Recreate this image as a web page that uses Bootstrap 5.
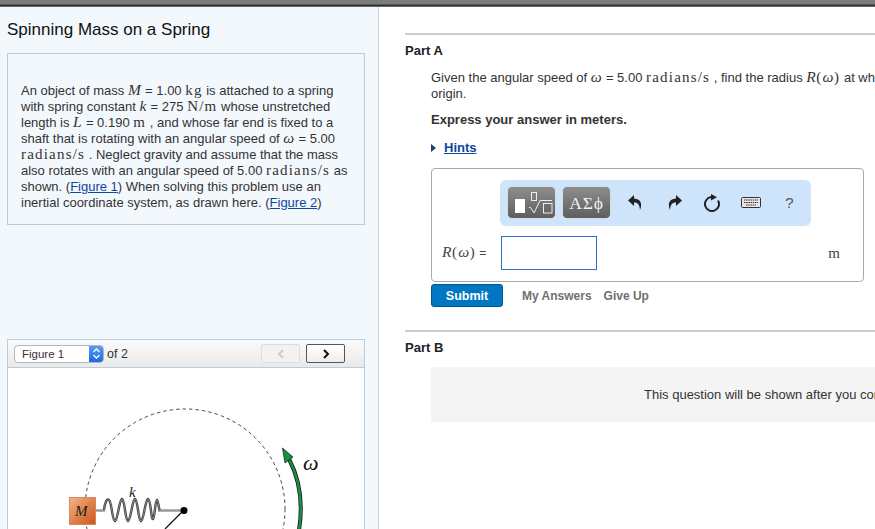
<!DOCTYPE html>
<html lang="en">
<head>
<meta charset="utf-8">
<title>Spinning Mass on a Spring</title>
<link href="https://cdn.jsdelivr.net/npm/bootstrap@5.3.0/dist/css/bootstrap.min.css" rel="stylesheet">
<style>
html,body{height:529px;overflow:hidden;background:#fff}
body{font-family:"Liberation Sans",Arial,sans-serif;font-size:13px;line-height:16px;color:#333}
.topstrip{height:7px;background:linear-gradient(#7b7b7b 0,#7b7b7b 4px,#333 5px,#333 6px,#999 7px)}
.shell{height:522px}
.leftpane{width:379px;flex:none;background:#f3f8fd;border-right:1px solid #c6d6e6;padding:0 13px 0 7px}
.rightpane{flex:1 1 auto;min-width:0;overflow:hidden;padding:26px 0 0 26px}
.ptitle{font-size:17px;line-height:22px;font-weight:400;color:#111;margin:12px 0 12px}
.probbox{height:172px;border:1px solid #b7cde0;padding:29px 13px 0;white-space:nowrap}
.probbox a,.hintlink{color:#0f46a0;text-decoration:underline}
.mth{font-family:"Liberation Serif",serif;font-size:15px;line-height:0;letter-spacing:1.2px}
.mi{font-family:"Liberation Serif",serif;font-size:15.5px;font-style:italic;line-height:0;letter-spacing:.6px}
.figpanel{margin-top:114px;border:1px solid #b7cde0;background:#fff;height:200px}
.figbar{height:28px;background:linear-gradient(#fbfbfb,#e9e9e9);border-bottom:1px solid #b7cde0;padding:0 19px 0 6px}
.figselect{width:90px;height:18px;background:#fff;border:1px solid #b5b5b5;border-radius:4px;padding-left:7px;font-size:11.5px;line-height:16px;overflow:hidden;position:relative}
.figarrows{position:absolute;right:-1px;top:-1px;width:15px;height:18px;background:linear-gradient(#5b9ff5,#1668e0);border-radius:0 4px 4px 0;display:flex;align-items:center;justify-content:center}
.ofword{margin-left:3px;font-size:12.5px}
.navgroup{gap:6px}
.navbtn{width:39px;height:19px;border:1px solid #555;border-radius:2px;background:linear-gradient(#fff,#eee);padding:0;display:flex;align-items:center;justify-content:center}
.navbtn.dimmed{border-color:#ddd;background:#f2f2f2}
.figcanvas{display:block}
.partrule{height:2px;background:#ccc;border:0;margin:0;opacity:1}
.parthead{font-size:13px;font-weight:700;line-height:16px;color:#222;margin:8px 0 0}
.partbody{padding-left:26px}
.qtext{margin:11px 0 0;white-space:nowrap;line-height:16px}
.express{font-weight:700;margin:10px 0 0;color:#333}
.hintrow{margin-top:12px;font-weight:700}
.answerbox{width:433px;height:114px;margin-top:12px;border:1px solid #aaa;border-radius:4px;padding:11px 0 0 10px}
.mathbar{width:311px;height:46px;margin-left:58px;background:#cde4fb;border-radius:6px;padding:6px 0 0 7px}
.toolbtn{flex:none;width:49px;height:33px;border-radius:5px;border:1px solid #d5dde5;background:linear-gradient(#8e8e8e,#5e5e5e);color:#f1f1f1;padding:0;display:flex;align-items:center;justify-content:center;font-family:"Liberation Serif",serif;font-size:17.5px;letter-spacing:.8px}
.toolbtn+.toolbtn{margin-left:6px}
.mathtools{height:33px}
.undoico{margin-left:17px}
.redoico{margin-left:26px}
.resetico{margin-left:21px}
.keysico{margin-left:20px}
.helpmark{margin-left:24px;font-size:15.5px;color:#555}
.ansrow{margin-top:10px;height:34px}
.anslabel{width:59px;font-size:12px;color:#444}
.ansinput{width:96px;height:34px;border:1px solid #2f6fc4;border-radius:0;background:#fff;padding:0}
.unitm{margin-left:auto;margin-right:23px;font-family:"Liberation Serif",serif;font-size:15px;color:#444}
.actions{margin-top:2px;height:23px}
.submitbtn{width:72px;height:23px;background:#0077c2;border:1px solid #00568f;border-radius:3px;color:#fff;font-size:12.5px;font-weight:700;padding:0;line-height:20px}
.greylink{font-size:12px;font-weight:700;color:#6f6f6f;text-decoration:none}
.myanswers{margin-left:19px}
.giveup{margin-left:12px}
.partgap{margin-top:23px}
.lockedbox{height:55px;margin-top:11px;background:#f4f4f4;padding-left:213px;white-space:nowrap;line-height:55px}
</style>
</head>
<body>
<div class="topstrip"></div>
<div class="shell d-flex">
  <div class="leftpane">
    <h1 class="ptitle">Spinning Mass on a Spring</h1>
    <div class="probbox">An object of mass <span class="mi">M</span> = 1.00 <span class="mth">kg</span> is attached to a spring<br>with spring constant <span class="mi">k</span> = 275 <span class="mth">N/m</span> whose unstretched<br>length is <span class="mi">L</span> = 0.190 <span class="mth">m</span> , and whose far end is fixed to a<br>shaft that is rotating with an angular speed of <span class="mi">ω</span> = 5.00<br><span class="mth">radians/s</span> . Neglect gravity and assume that the mass<br>also rotates with an angular speed of 5.00 <span class="mth">radians/s</span> as<br>shown. (<a href="#">Figure 1</a>) When solving this problem use an<br>inertial coordinate system, as drawn here. (<a href="#">Figure 2</a>)</div>
    <div class="figpanel">
      <div class="figbar d-flex align-items-center">
        <div class="figselect">Figure 1<span class="figarrows"><svg width="9" height="13" viewBox="0 0 9 13"><path d="M1.500 5 4.500 2 7.500 5M1.500 8l3 3 3-3" fill="none" stroke="#fff" stroke-width="1.300"/></svg></span></div>
        <span class="ofword">of 2</span>
        <div class="d-flex ms-auto navgroup">
          <button class="navbtn dimmed" type="button" aria-label="Previous"><svg width="8" height="10" viewBox="0 0 8 10"><path d="M6 1 2 5l4 4" fill="none" stroke="#ccc" stroke-width="2"/></svg></button>
          <button class="navbtn" type="button" aria-label="Next"><svg width="8" height="10" viewBox="0 0 8 10"><path d="M2 1l4 4-4 4" fill="none" stroke="#111" stroke-width="2"/></svg></button>
        </div>
      </div>
      <svg class="figcanvas" width="357" height="161" viewBox="8 368 357 161">
        <circle cx="185" cy="509" r="100" fill="none" stroke="#333" stroke-width=".9" stroke-dasharray="3.500 3"/>
        <path d="M96 510.500h9M158 510.500h24" stroke="#999" stroke-width="2.500" fill="none"/>
        <path d="M165 529 184 510" stroke="#111" stroke-width="1.200"/>
        <circle cx="184" cy="510.500" r="3.500" fill="#000"/>
        <defs><linearGradient id="massfill" x1="0" y1="0" x2="1" y2="1"><stop offset="0" stop-color="#f3b48c"/><stop offset="1" stop-color="#cf5312"/></linearGradient></defs>
        <path d="M69 497h27v28H69z" fill="#fff"/>
        <rect x="69.500" y="497.500" width="26" height="27" fill="url(#massfill)" stroke="#d98a5b"/>
        <path d="M104 510C105 502 107 498 109 500C112 503 112 520 115 521C118 520 119 500 122 499C125 500 125 520 128 521C131 520 132 500 135 499C138 500 138 520 141 521C144 520 145 500 148 499C151 500 151 520 153 519C155 517 155 500 157 500C159 502 158 508 160 510" fill="none" stroke="#3c3c3c" stroke-width="2.400"/>
        <path d="M104 510C105 502 107 498 109 500C112 503 112 520 115 521C118 520 119 500 122 499C125 500 125 520 128 521C131 520 132 500 135 499C138 500 138 520 141 521C144 520 145 500 148 499C151 500 151 520 153 519C155 517 155 500 157 500C159 502 158 508 160 510" fill="none" stroke="#aaa" stroke-width=".7"/>
        <text x="75" y="516" font-family="Liberation Serif" font-style="italic" font-size="15" fill="#222">M</text>
        <text x="129" y="497" font-family="Liberation Serif" font-style="italic" font-size="15" fill="#222">k</text>
        <text x="303" y="470" font-family="Liberation Serif" font-style="italic" font-size="22" fill="#111">ω</text>
        <path d="M299 530C303 505 300 480 289 459" fill="none" stroke="#111" stroke-width="4"/>
        <path d="M299 530C303 505 300 480 289 459" fill="none" stroke="#179043" stroke-width="2.600"/>
        <path d="M282.500 448 293 457 285 463z" fill="#179043" stroke="#111" stroke-width=".7"/>
      </svg>
    </div>
  </div>
  <div class="rightpane">
    <hr class="partrule">
    <div class="parthead">Part A</div>
    <div class="partbody">
      <p class="qtext">Given the angular speed of <span class="mi">ω</span> = 5.00 <span class="mth">radians/s</span> , find the radius <span class="mi">R</span><span class="mth">(</span><span class="mi">ω</span><span class="mth">)</span> at which the mass will rotate about the<br>origin.</p>
      <p class="express">Express your answer in meters.</p>
      <div class="hintrow d-flex align-items-center"><svg class="me-2" width="5" height="8" viewBox="0 0 5 8"><path d="M0 0l5 4-5 4z" fill="#1a3f7a"/></svg><a class="hintlink" href="#">Hints</a></div>
      <div class="answerbox">
        <div class="mathbar d-flex align-items-start">
          <button class="toolbtn" type="button" aria-label="Templates"><svg width="47" height="31" viewBox="1 1 47 31"><rect x="8" y="13" width="10" height="14" fill="#fff"/><rect x="24.500" y="6.500" width="5" height="8" fill="none" stroke="#eee"/><path d="M22 21.500h1.500L27 27l6-12.500h12" fill="none" stroke="#eee"/><rect x="36.500" y="17.500" width="8.500" height="9.500" fill="none" stroke="#eee"/></svg></button>
          <button class="toolbtn" type="button" aria-label="Symbols">ΑΣϕ</button>
          <div class="d-flex align-items-center mathtools">
            <svg class="undoico" width="14" height="15" viewBox="0 0 14 15"><path d="M6 0 0 5.500 6 11V7.500c3.500-.3 5.500 1.500 6 7.500 2.500-6 1-11-6-11.500z" fill="#222"/></svg>
            <svg class="redoico" width="14" height="15" viewBox="0 0 14 15"><path d="M8 0l6 5.500L8 11V7.500c-3.500-.3-5.500 1.500-6 7.500-2.500-6-1-11 6-11.500z" fill="#222"/></svg>
            <svg class="resetico" width="18" height="18" viewBox="0 0 18 18"><path d="M15 6.400A7 7 0 1 1 8 3.100" fill="none" stroke="#222" stroke-width="2"/><path d="M8 0l6 3.200-6 3.300z" fill="#222"/></svg>
            <svg class="keysico" width="20" height="11" viewBox="0 0 20 11"><rect x=".5" y=".5" width="19" height="10" rx="1" fill="#e6e6e6" stroke="#333"/><path d="M3 3h14M3 5.500h14M5 8h10" stroke="#333" stroke-dasharray="1.500 .7"/></svg>
            <span class="helpmark">?</span>
          </div>
        </div>
        <div class="ansrow d-flex align-items-center">
          <div class="anslabel"><span class="mi">R</span><span class="mth">(</span><span class="mi">ω</span><span class="mth">)</span> =</div>
          <input class="ansinput" type="text" aria-label="Answer">
          <span class="unitm">m</span>
        </div>
      </div>
      <div class="actions d-flex align-items-center">
        <button class="submitbtn" type="button">Submit</button>
        <a class="greylink myanswers" href="#">My Answers</a>
        <a class="greylink giveup" href="#">Give Up</a>
      </div>
    </div>
    <hr class="partrule partgap">
    <div class="parthead">Part B</div>
    <div class="partbody">
      <div class="lockedbox">This question will be shown after you complete previous question(s).</div>
    </div>
  </div>
</div>
</body>
</html>
